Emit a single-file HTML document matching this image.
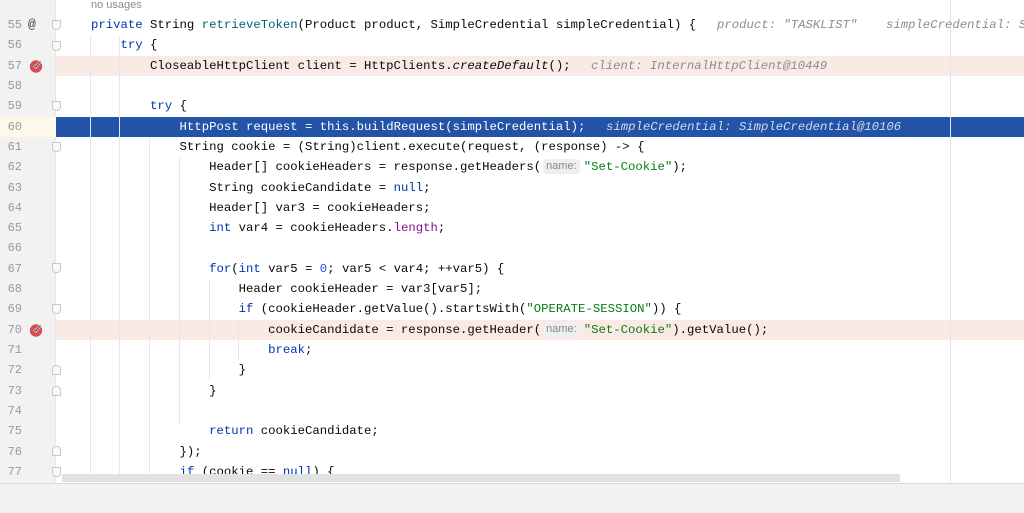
<!DOCTYPE html>
<html><head><meta charset="utf-8"><style>
*{margin:0;padding:0;box-sizing:border-box}
body{width:1024px;height:513px;overflow:hidden;background:#fff;position:relative;font-family:"Liberation Mono",monospace;font-size:12.3px;color:#080808}
.gut{position:absolute;left:0;top:0;width:56px;height:483px;background:#f2f2f2;border-right:1px solid #e6e6e6}
.row{position:absolute;left:0;width:1024px;height:20.3px;line-height:20.3px;white-space:pre}
.num{position:absolute;left:0;width:22px;text-align:right;color:#9a9a9a;font-size:12px}
.code{position:absolute;left:91px}
.k{color:#0033b3}.m{color:#00627a}.s{color:#067d17}.f{color:#871094}.n{color:#1750eb}.i{font-style:italic}
.h{color:#8c8c8c;font-style:italic}
.nm{display:inline-block;font-family:"Liberation Sans",sans-serif;font-size:11px;color:#8a8a8a;background:#efefef;border-radius:4px;line-height:15px;padding:0 3px;margin:0 4px 0 2px;vertical-align:1px}
.bp{background:#faeae6}
.sel{background:#2253a7;color:#fff}
.sel span{color:#fff}
.sel .h{color:#d0daf0}
.g{position:absolute;width:1px;background:#e8e8e8}
.fold{position:absolute;left:52px;width:9px;height:10px;border:1px solid #c9c9c9;background:#fafafa;border-radius:0 0 4px 4px}
.dot{position:absolute;left:29px;width:14px;height:14px}
</style></head><body>
<div class="gut"></div>
<div style="position:absolute;left:0;top:116.6px;width:56px;height:20.3px;background:#fdf9e9"></div>
<div class="row bp" style="top:55.6px;left:56px"></div>
<div class="row bp" style="top:320px;left:56px"></div>
<div class="row sel" style="top:116.6px;left:56px"></div>
<div class="g" style="left:90px;top:36px;height:440px"></div>
<div class="g" style="left:119px;top:36px;height:440px"></div>
<div class="g" style="left:149px;top:138px;height:336px"></div>
<div class="g" style="left:179px;top:158px;height:266px"></div>
<div class="g" style="left:209px;top:280px;height:100px"></div>
<div class="g" style="left:238px;top:320px;height:40px"></div>
<div style="position:absolute;left:950px;top:0;width:1px;height:483px;background:#e4e4e4"></div>
<div class="row" style="top:-5px"><span class="code" style="font-family:'Liberation Sans',sans-serif;font-size:11px;color:#8c8c8c">no usages</span></div>
<div class="row" style="top:15px"><span class="num">55</span><span style="position:absolute;left:28px;color:#444;font-size:13px">@</span><span class="code"><span class="k">private</span> String <span class="m">retrieveToken</span>(Product product, SimpleCredential simpleCredential) {</span><span class="h" style="position:absolute;left:717px">product: "TASKLIST"</span><span class="h" style="position:absolute;left:886px">simpleCredential: S</span></div>
<div class="row" style="top:35.3px"><span class="num">56</span><span class="code">    <span class="k">try</span> {</span></div>
<div class="row" style="top:55.6px"><span class="num">57</span><span class="code">        CloseableHttpClient client = HttpClients.<span class="i">createDefault</span>();</span><span class="h" style="position:absolute;left:591px">client: InternalHttpClient@10449</span></div>
<div class="row" style="top:75.9px"><span class="num">58</span></div>
<div class="row" style="top:96.2px"><span class="num">59</span><span class="code">        <span class="k">try</span> {</span></div>
<div class="row sel" style="top:116.6px;background:none"><span class="num" style="color:#9a9a9a">60</span><span class="code">            HttpPost request = <span class="k">this</span>.buildRequest(simpleCredential);</span><span class="h" style="position:absolute;left:606px">simpleCredential: SimpleCredential@10106</span></div>
<div class="row" style="top:136.9px"><span class="num">61</span><span class="code">            String cookie = (String)client.execute(request, (response) -&gt; {</span></div>
<div class="row" style="top:157.2px"><span class="num">62</span><span class="code">                Header[] cookieHeaders = response.getHeaders(<span class="nm">name:</span><span class="s">"Set-Cookie"</span>);</span></div>
<div class="row" style="top:177.5px"><span class="num">63</span><span class="code">                String cookieCandidate = <span class="k">null</span>;</span></div>
<div class="row" style="top:197.8px"><span class="num">64</span><span class="code">                Header[] var3 = cookieHeaders;</span></div>
<div class="row" style="top:218.1px"><span class="num">65</span><span class="code">                <span class="k">int</span> var4 = cookieHeaders.<span class="f">length</span>;</span></div>
<div class="row" style="top:238.4px"><span class="num">66</span></div>
<div class="row" style="top:258.7px"><span class="num">67</span><span class="code">                <span class="k">for</span>(<span class="k">int</span> var5 = <span class="n">0</span>; var5 &lt; var4; ++var5) {</span></div>
<div class="row" style="top:279px"><span class="num">68</span><span class="code">                    Header cookieHeader = var3[var5];</span></div>
<div class="row" style="top:299.4px"><span class="num">69</span><span class="code">                    <span class="k">if</span> (cookieHeader.getValue().startsWith(<span class="s">"OPERATE-SESSION"</span>)) {</span></div>
<div class="row" style="top:319.7px"><span class="num">70</span><span class="code">                        cookieCandidate = response.getHeader(<span class="nm">name:</span><span class="s">"Set-Cookie"</span>).getValue();</span></div>
<div class="row" style="top:340px"><span class="num">71</span><span class="code">                        <span class="k">break</span>;</span></div>
<div class="row" style="top:360.3px"><span class="num">72</span><span class="code">                    }</span></div>
<div class="row" style="top:380.6px"><span class="num">73</span><span class="code">                }</span></div>
<div class="row" style="top:400.9px"><span class="num">74</span></div>
<div class="row" style="top:421.2px"><span class="num">75</span><span class="code">                <span class="k">return</span> cookieCandidate;</span></div>
<div class="row" style="top:441.5px"><span class="num">76</span><span class="code">            });</span></div>
<div class="row" style="top:461.8px"><span class="num">77</span><span class="code">            <span class="k">if</span> (cookie == <span class="k">null</span>) {</span></div>
<svg class="dot" style="top:59px" viewBox="0 0 14 14"><circle cx="7" cy="7.5" r="6.2" fill="#db4b54"/><path d="M4.5 6 L6.8 8.2 L11.5 2.5" stroke="#fff" stroke-width="2.2" fill="none"/><path d="M4.5 6 L6.8 8.2 L11.5 2.5" stroke="#333" stroke-width="1" fill="none"/></svg>
<svg class="dot" style="top:323px" viewBox="0 0 14 14"><circle cx="7" cy="7.5" r="6.2" fill="#db4b54"/><path d="M4.5 6 L6.8 8.2 L11.5 2.5" stroke="#fff" stroke-width="2.2" fill="none"/><path d="M4.5 6 L6.8 8.2 L11.5 2.5" stroke="#333" stroke-width="1" fill="none"/></svg>
<div class="fold" style="top:20px"></div>
<div class="fold" style="top:41px"></div>
<div class="fold" style="top:101px"></div>
<div class="fold" style="top:142px"></div>
<div class="fold" style="top:263px"></div>
<div class="fold" style="top:304px"></div>
<div class="fold" style="top:365px;border-radius:4px 4px 0 0"></div>
<div class="fold" style="top:386px;border-radius:4px 4px 0 0"></div>
<div class="fold" style="top:446px;border-radius:4px 4px 0 0"></div>
<div class="fold" style="top:467px"></div>
<div style="position:absolute;left:62px;top:474px;width:838px;height:8px;background:#e2e2e2"></div>
<div style="position:absolute;left:0;top:483px;width:1024px;height:30px;background:#f2f2f2;border-top:1px solid #dcdcdc"></div>
</body></html>
